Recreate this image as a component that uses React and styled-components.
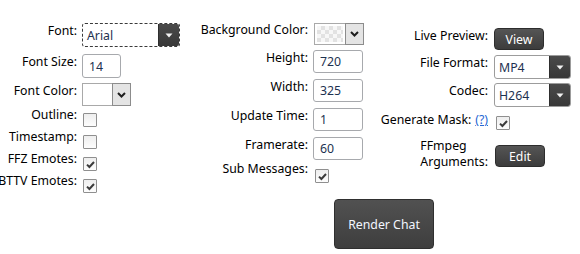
import styled, { createGlobalStyle } from "styled-components";

const GlobalStyle = createGlobalStyle`
    body {
        margin: 0;
        background: #fff;
        font-family: "Noto Sans", "Open Sans", sans-serif;
        font-size: 12.3px;
        color: #000;
    }
`

const Check = ({ checked }) => (
    <CheckBox>
        {checked && (
            <svg width="11" height="11" viewBox="0 0 11 11">
                <path d="M2 5.6 L4.4 8 L9 3" fill="none" stroke="#3b3b3b" strokeWidth="2" />
            </svg>
        )}
    </CheckBox>
);

const Arrow = ({ dark }) => (
    dark ? (
        <svg width="8" height="5" viewBox="0 0 8 5">
            <path d="M0.5 0.5 L7.5 0.5 L4 4.5 Z" fill="#f2f2f2" />
        </svg>
    ) : (
        <svg width="9" height="6" viewBox="0 0 9 6">
            <path d="M1 1 L4.5 4.5 L8 1" fill="none" stroke="#1e1e1e" strokeWidth="2" />
        </svg>
    )
);

const Select = ({ value, width, height, focused }) => (
    <SelectBox $w={width} $h={height} className={focused ? "focused" : ""}>
        <SelectValue>{value}</SelectValue>
        <DarkArrow><Arrow dark /></DarkArrow>
    </SelectBox>
);

const ColorPicker = ({ width, height, checker }) => (
    <PickerBox $w={width} $h={height}>
        <Swatch><SwatchFill $checker={checker} /></Swatch>
        <LightArrow><Arrow /></LightArrow>
    </PickerBox>
);

const App = () => {
    return (
        <>
            <GlobalStyle />
            <Page>
                <Column $width={180} $labelW={77} $gap={5} $top={23}>
                    <Field $h={24}>
                        <Label>Font:</Label>
                        <Select value="Arial" width={98} height={24} focused />
                    </Field>
                    <Field $h={24} $mt={7}>
                        <Label>Font Size:</Label>
                        <TextBox $w={39} $h={24} value="14" readOnly />
                    </Field>
                    <Field $h={23} $mt={5}>
                        <Label>Font Color:</Label>
                        <ColorPicker width={49} height={23} />
                    </Field>
                    <Field $h={22} $mt={1}>
                        <Label>Outline:</Label>
                        <CheckSlot $drop={6}><Check /></CheckSlot>
                    </Field>
                    <Field $h={22}>
                        <Label>Timestamp:</Label>
                        <CheckSlot $drop={6}><Check /></CheckSlot>
                    </Field>
                    <Field $h={22}>
                        <Label>FFZ Emotes:</Label>
                        <CheckSlot $drop={6}><Check checked /></CheckSlot>
                    </Field>
                    <Field $h={22}>
                        <Label>BTTV Emotes:</Label>
                        <CheckSlot $drop={6}><Check checked /></CheckSlot>
                    </Field>
                </Column>

                <Column $width={183} $labelW={128} $gap={5} $top={22}>
                    <Field $h={23}>
                        <Label>Background Color:</Label>
                        <CheckSlot $drop={1}><ColorPicker width={50} height={22} checker /></CheckSlot>
                    </Field>
                    <Field $h={23} $mt={5}>
                        <Label>Height:</Label>
                        <TextBox $w={50} $h={23} value="720" readOnly />
                    </Field>
                    <Field $h={23} $mt={6}>
                        <Label>Width:</Label>
                        <TextBox $w={50} $h={23} value="325" readOnly />
                    </Field>
                    <Field $h={23} $mt={6}>
                        <Label>Update Time:</Label>
                        <TextBox $w={50} $h={23} value="1" readOnly />
                    </Field>
                    <Field $h={23} $mt={6}>
                        <Label>Framerate:</Label>
                        <TextBox $w={50} $h={23} value="60" readOnly />
                    </Field>
                    <Field $h={22} $mt={1}>
                        <Label>Sub Messages:</Label>
                        <CheckSlot $drop={8} $left={2}><Check checked /></CheckSlot>
                    </Field>
                    <RenderRow>
                        <RenderButton>Render Chat</RenderButton>
                    </RenderRow>
                </Column>

                <Column $width={217} $labelW={125} $gap={6} $top={28}>
                    <Field $h={21}>
                        <Label>Live Preview:</Label>
                        <DarkButton>View</DarkButton>
                    </Field>
                    <Field $h={24} $mt={6}>
                        <Label>File Format:</Label>
                        <Select value="MP4" width={77} height={24} />
                    </Field>
                    <Field $h={24} $mt={4}>
                        <Label>Codec:</Label>
                        <Select value="H264" width={77} height={24} />
                    </Field>
                    <Field $h={22} $mt={5}>
                        <Label>Generate Mask: <HelpLink>(?)</HelpLink></Label>
                        <CheckSlot $drop={4} $left={2}><Check checked /></CheckSlot>
                    </Field>
                    <Field $h={32} $mt={4}>
                        <Label>
                            <TwoLine>FFmpeg<br />Arguments:</TwoLine>
                        </Label>
                        <CheckSlot $drop={7}><DarkButton>Edit</DarkButton></CheckSlot>
                    </Field>
                </Column>
            </Page>
        </>
    )
};

const Page = styled.div`
    display: flex;
    align-items: flex-start;
    height: 254px;
    overflow: hidden;
`

const Column = styled.div`
    --label-w: ${p => p.$labelW}px;
    --gap: ${p => p.$gap}px;
    display: flex;
    flex-direction: column;
    flex-shrink: 0;
    width: ${p => p.$width}px;
    padding-top: ${p => p.$top}px;
`

const Field = styled.div`
    display: flex;
    align-items: flex-start;
    gap: var(--gap);
    height: ${p => p.$h}px;
    margin-top: ${p => p.$mt || 0}px;
`

const Label = styled.div`
    width: var(--label-w);
    flex-shrink: 0;
    display: flex;
    justify-content: flex-end;
    align-items: flex-start;
    align-self: stretch;
    white-space: nowrap;
    line-height: 16px;
    gap: 4px;
`

const TwoLine = styled.div`
    text-align: left;
    line-height: 16px;
`

const HelpLink = styled.span`
    color: #2767d3;
    text-decoration: underline;
`

const TextBox = styled.input`
    box-sizing: border-box;
    width: ${p => p.$w}px;
    height: ${p => p.$h}px;
    border: 1px solid #a7a9ad;
    border-radius: 3px;
    padding: 0 6px;
    margin: 0;
    font: inherit;
    color: #1d3150;
    background: #fff;
    outline: none;
`

const SelectBox = styled.div`
    box-sizing: border-box;
    display: flex;
    width: ${p => p.$w}px;
    height: ${p => p.$h}px;
    border: 1px solid #9c9c9c;
    border-radius: 3px;
    overflow: hidden;
    background: #fff;

    &.focused {
        border: 1px dashed #3a3a3a;
    }
`

const SelectValue = styled.div`
    flex: 1;
    display: flex;
    align-items: center;
    padding-left: 4px;
    color: #1d3150;
`

const DarkArrow = styled.div`
    width: 20px;
    display: flex;
    align-items: center;
    justify-content: center;
    background: linear-gradient(#4a4a4a, #383838);
    border-left: 1px solid #2e2e2e;
`

const PickerBox = styled.div`
    display: flex;
    width: ${p => p.$w}px;
    height: ${p => p.$h}px;
`

const Swatch = styled.div`
    box-sizing: border-box;
    flex: 1;
    border: 1px solid #a9a9a9;
    border-right: none;
    padding: 2px;
    background: #fff;
`

const SwatchFill = styled.div`
    width: 100%;
    height: 100%;
    background-image: ${p => p.$checker
        ? "conic-gradient(#e2e2e2 25%, #f7f7f7 0 50%, #e2e2e2 0 75%, #f7f7f7 0)"
        : "none"};
    background-size: 8px 8px;
`

const LightArrow = styled.div`
    box-sizing: border-box;
    width: 19px;
    display: flex;
    align-items: center;
    justify-content: center;
    background: #e4e4e4;
    border: 1px solid #8c8c8c;
`

const CheckSlot = styled.div`
    padding-top: ${p => p.$drop || 0}px;
    padding-left: ${p => p.$left || 1}px;
`

const CheckBox = styled.span`
    box-sizing: border-box;
    display: flex;
    align-items: center;
    justify-content: center;
    width: 14px;
    height: 14px;
    border: 1px solid #8f8f8f;
    border-radius: 1px;
    background: linear-gradient(#eeeeee, #fdfdfd);
`

const DarkButton = styled.div`
    box-sizing: border-box;
    width: 50px;
    height: 22px;
    display: flex;
    align-items: center;
    justify-content: center;
    border: 1px solid #2d2d2d;
    border-radius: 4px;
    background: linear-gradient(#555555, #3c3c3c);
    color: #fff;
`

const RenderRow = styled.div`
    display: flex;
    padding-left: 154px;
    margin-top: 16px;
`

const RenderButton = styled.div`
    box-sizing: border-box;
    flex-shrink: 0;
    width: 100px;
    height: 50px;
    display: flex;
    align-items: center;
    justify-content: center;
    border: 1px solid #2f2f2f;
    border-radius: 4px;
    background: linear-gradient(#515151, #3e3e3e);
    color: #f3f6ff;
`

export default App;
